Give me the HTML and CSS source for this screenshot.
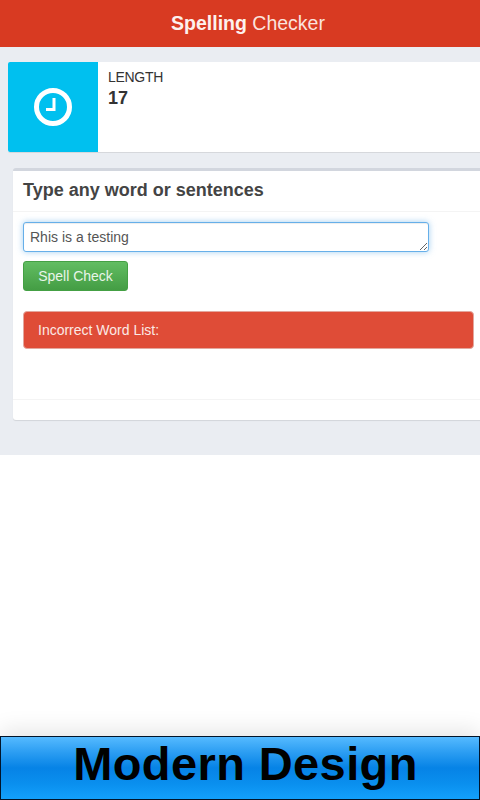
FILE: index.html
```html
<!DOCTYPE html>
<html lang="en">
<head>
<meta charset="utf-8">
<title>Spelling Checker</title>
<link rel="stylesheet" href="styles.css">
</head>
<body>
<div class="app">
  <header class="topbar"><b>Spelling</b> Checker</header>
  <main class="content">
    <section class="info-box">
      <div class="info-icon">
        <svg width="40" height="40" viewBox="0 0 40 40" fill="none" stroke="#fff">
          <circle cx="20" cy="20" r="16.5" stroke-width="5"/>
          <path d="M21 11V22.5H13" stroke-width="3"/>
        </svg>
      </div>
      <div class="info-text">
        <div class="info-label">LENGTH</div>
        <div class="info-value">17</div>
      </div>
    </section>
    <section class="panel">
      <h2 class="panel-title">Type any word or sentences</h2>
      <div class="panel-body">
        <textarea class="field" rows="1">Rhis is a testing</textarea>
        <button class="btn" type="button">Spell Check</button>
        <div class="alert">Incorrect Word List:</div>
      </div>
      <div class="panel-footer"></div>
    </section>
  </main>
  <footer class="banner">Modern Design</footer>
</div>
</body>
</html>
```
FILE: styles.css
```css
* { box-sizing: border-box; }
html, body { margin: 0; height: 100%; }
body { font-family: "Liberation Sans", Arial, sans-serif; background: #fff; overflow: hidden; }
.app { width: 480px; height: 800px; display: flex; flex-direction: column; overflow: hidden; }
.topbar { height: 47px; flex: none; padding-left: 16px; background: #d83a22; color: #fbe3de; font-size: 19.5px; line-height: 47px; text-align: center; }
.topbar b { color: #fdf1ee; }
.content { flex: none; height: 408px; background: #eaedf2; padding: 15px 0 0 8px; width: 480px; overflow: hidden; }
.info-box { display: flex; width: 480px; height: 91px; background: #fff; border-radius: 2px; border-bottom: 1px solid #d6d8dc; }
.info-icon { width: 90px; height: 90px; flex: none; background: #00c0ef; border-radius: 2px 0 0 2px; display: flex; align-items: center; justify-content: center; }
.info-text { padding: 7px 10px; color: #333; }
.info-label { font-size: 14px; line-height: 16px; letter-spacing: -.3px; }
.info-value { font-size: 18px; font-weight: bold; line-height: 26px; }
.panel { width: 480px; margin: 15px 0 0 5px; height: 252px; background: #fff; border-top: 3px solid #d2d6de; border-radius: 3px; box-shadow: 0 1px 1px rgba(0,0,0,.1); display: flex; flex-direction: column; }
.panel-title { margin: 0; height: 41px; padding: 0 10px; font-size: 18px; line-height: 38px; color: #444; border-bottom: 1px solid #f4f4f4; flex: none; }
.panel-body { padding: 10px; flex: 1; display: flex; flex-direction: column; align-items: flex-start; }
.field { display: block; width: 406px; height: 30px; padding: 6px 12px 6px 6px; margin: 0; font: 14px/17px "Liberation Sans", Arial, sans-serif; color: #555; border: 1px solid #66afe9; border-radius: 3px; outline: 0; box-shadow: inset 0 1px 1px rgba(0,0,0,.075), 0 0 6px rgba(102,175,233,.6); resize: vertical; overflow: hidden; }
.btn { margin-top: 9px; width: 105px; height: 30px; padding: 0; font: 14px "Liberation Sans", Arial, sans-serif; color: #e9f5e9; background: linear-gradient(#62bd62, #449d44); border: 1px solid #44a044; border-radius: 3px; }
.alert { margin-top: 20px; width: 451px; height: 38px; padding-left: 14px; font-size: 14px; line-height: 37px; color: #fbe9e5; background: #df4c37; border: 1px solid #e3a79e; border-radius: 4px; }
.panel-footer { height: 21px; flex: none; border-top: 1px solid #f4f4f4; }
.banner { margin-top: auto; position: relative; height: 64px; flex: none; padding-left: 11px; font-size: 47px; font-weight: bold; line-height: 53px; text-align: center; letter-spacing: .4px; color: #000; border: 1px solid #00142a; background: linear-gradient(#55baff 0%, #2b9df2 25%, #0683e6 50%, #0a8fee 75%, #13a0fb 100%); box-shadow: 0 -6px 22px rgba(0,0,0,.1); }
```
